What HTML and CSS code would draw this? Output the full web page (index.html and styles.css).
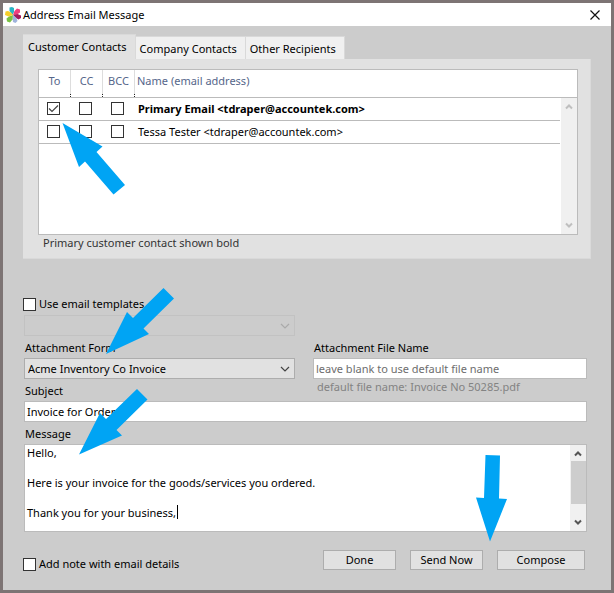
FILE: index.html
```html
<!DOCTYPE html>
<html lang="en">
<head>
<meta charset="utf-8">
<title>Address Email Message</title>
<link rel="stylesheet" href="styles.css">
</head>
<body>
<main class="window">
  <header class="titlebar">
    <svg class="logo" viewBox="0 0 16 16" aria-hidden="true">
      <path fill="#29b5c5" d="M7.500 8 4.500 4 4.500.5 7 0 9 1 9 5z"/>
      <path fill="#ee3f7c" d="M8 8 9.500 4 12 1.500 15 2.500 15 5.500 12 7.500z"/>
      <path fill="#a3195b" d="M8 8 12.500 7 16 8.500 16 11 13.500 12.500 11 11z"/>
      <path fill="#9fb4dc" d="M8 8 11.500 11 12.500 14 10.500 16 8 15 7.500 11z"/>
      <path fill="#7ac143" d="M8 8 7.500 12.500 5 15.500 2 14.500 1.500 11.500 4 9.500z"/>
      <path fill="#f5cf2b" d="M8 8 3.500 9.500 0 8 .5 4.500 3 4 6 5.500z"/>
    </svg>
    <h1 class="title">Address Email Message</h1>
    <button class="close" type="button" aria-label="Close">
      <svg viewBox="0 0 10 10"><path d="M.5.500 9.500 9.500M9.500.500.500 9.500" fill="none" stroke="#111" stroke-width="1.200"/></svg>
    </button>
  </header>

  <div class="content">
    <nav class="tabs" role="tablist">
      <button class="tab tab-active" type="button" role="tab" aria-selected="true">Customer Contacts</button>
      <button class="tab" type="button" role="tab">Company Contacts</button>
      <button class="tab" type="button" role="tab">Other Recipients</button>
    </nav>
    <section class="panel">
      <div class="grid">
        <table class="contacts">
          <thead>
            <tr><th class="pick">To</th><th class="pick">CC</th><th class="pick">BCC</th><th class="name">Name (email address)</th><th class="gutter"></th></tr>
          </thead>
          <tbody>
            <tr class="primary">
              <td><input class="check" type="checkbox" aria-label="To Primary Email" checked></td>
              <td><input class="check" type="checkbox" aria-label="CC Primary Email"></td>
              <td><input class="check" type="checkbox" aria-label="BCC Primary Email"></td>
              <td class="name">Primary Email &lt;tdraper@accountek.com&gt;</td>
            </tr>
            <tr>
              <td><input class="check" type="checkbox" aria-label="To Tessa Tester"></td>
              <td><input class="check" type="checkbox" aria-label="CC Tessa Tester"></td>
              <td><input class="check" type="checkbox" aria-label="BCC Tessa Tester"></td>
              <td class="name">Tessa Tester &lt;tdraper@accountek.com&gt;</td>
            </tr>
          </tbody>
        </table>
        <div class="scrollbar scrollbar-off grid-scroll">
          <svg class="chev" viewBox="0 0 8 6"><path d="M1 4.500 4 1.500 7 4.500"/></svg>
          <svg class="chev" viewBox="0 0 8 6"><path d="M1 1.500 4 4.500 7 1.500"/></svg>
        </div>
      </div>
      <p class="note">Primary customer contact shown bold</p>
    </section>

    <form class="form">
      <label class="option"><input class="check" type="checkbox">Use email templates</label>
      <div class="columns">
        <div class="picker">
          <select class="field" aria-label="Email template" disabled><option></option></select>
          <svg class="arrow arrow-off" viewBox="0 0 10 6"><path d="M1 1 5 5 9 1"/></svg>
        </div>
      </div>
      <div class="columns">
        <div class="column">
          <label class="label" for="form">Attachment Form</label>
          <div class="picker">
            <select class="field" id="form"><option>Acme Inventory Co Invoice</option></select>
            <svg class="arrow" viewBox="0 0 10 6"><path d="M1 1 5 5 9 1"/></svg>
          </div>
          <label class="label" for="subject">Subject</label>
        </div>
        <div class="column">
          <label class="label" for="file">Attachment File Name</label>
          <input class="field" id="file" type="text" placeholder="leave blank to use default file name">
          <p class="hint">default file name: Invoice No 50285.pdf</p>
        </div>
      </div>
      <input class="field" id="subject" type="text" value="Invoice for Order">
      <label class="label" for="message">Message</label>
      <div class="message">
        <textarea class="text" id="message" rows="5">Hello,

Here is your invoice for the goods/services you ordered.

Thank you for your business,</textarea>
        <span class="caret"></span>
        <div class="scrollbar">
          <svg class="chev" viewBox="0 0 8 6"><path d="M1 4.500 4 1.500 7 4.500"/></svg>
          <div class="thumb"></div>
          <svg class="chev" viewBox="0 0 8 6"><path d="M1 1.500 4 4.500 7 1.500"/></svg>
        </div>
      </div>
      <footer class="footer">
        <label class="option"><input class="check" type="checkbox">Add note with email details</label>
        <div class="actions">
          <button class="button" type="button">Done</button>
          <button class="button" type="button">Send Now</button>
          <button class="button button-wide" type="button">Compose</button>
        </div>
      </footer>
    </form>
  </div>

  <svg class="pointers" width="614" height="593" viewBox="0 0 614 593" aria-hidden="true">
    <path d="M62.500 123 102.500 146.500 96.500 152 125 185 113.500 194.500 85 161.500 79 167z"/>
    <path d="M106 354 127 312 133 318 163.500 288 174 298.500 143.500 328.500 149 334z"/>
    <path d="M79 454.500 100 413 106 419 137 389 147.500 399.500 116.500 430 122 435.500z"/>
    <path d="M490 541.500 476 497.500 484 498 485.500 455 500 455.500 499 498.500 507 499z"/>
  </svg>
</main>
</body>
</html>
```
FILE: styles.css
```css
* { box-sizing: border-box; }

body {
  margin: 0;
  font: 11px/16px "Noto Sans", "Open Sans", sans-serif;
  color: #000;
}

button, input, select, textarea { font: inherit; color: inherit; margin: 0; }
p, h1 { margin: 0; }

.window {
  position: relative;
  min-height: 100vh;
  background: #ccc;
  border: 3px solid #7d7474;
}

.titlebar {
  display: flex;
  align-items: center;
  height: 23px;
  padding: 0 11px 0 2px;
  background: #fff;
}
.logo { width: 16px; height: 16px; }
.title { flex: 1; margin-left: 2px; font-size: 11px; font-weight: 400; }
.close { display: flex; padding: 0; border: 0; background: none; }
.close svg { width: 10px; height: 10px; }

.content { padding: 8px 20px 0; }

.tabs { display: flex; align-items: flex-end; height: 25px; }
.tab {
  height: 23px;
  padding: 2px 6px 0 4px;
  border: 1px solid #d9d9d9;
  border-left-width: 0;
  border-bottom: 0;
  background: #f0f0f0;
  white-space: nowrap;
}
.tab + .tab { padding: 2px 8px 0 4px; }
.tab-active {
  height: 25px;
  padding: 0 8px 0 5px;
  background: #e1e1e1;
}

.panel {
  padding: 10px 12px 8px 15px;
  background: #e1e1e1;
  border-right: 1px solid #dadada;
  border-bottom: 1px solid #d9d9d9;
}
.grid {
  position: relative;
  height: 166px;
  background: #fff;
  border: 1px solid #bbb;
}
.contacts { width: 100%; table-layout: fixed; border-collapse: separate; border-spacing: 0; }
.contacts th {
  position: relative;
  height: 28px;
  padding: 0 0 5px;
  border-bottom: 1px solid #bbb;
  color: #56668a;
  font-weight: 400;
}
.contacts th.pick { width: 32px; border-right: 1px solid #ddd; }
.contacts th.pick::after {
  content: "";
  position: absolute;
  right: -1px;
  bottom: 0;
  width: 1px;
  height: 3px;
  background: linear-gradient(#222 1px, #fff 1px, #fff 2px, #222 2px);
}
.contacts th.name { padding-left: 2px; }
.contacts th.gutter { width: 17px; }
.contacts td { height: 23px; padding: 0 3px 1px 0; border-bottom: 1px solid #bbb; text-align: center; }
.contacts td.name { padding-left: 3px; }
.contacts .name { text-align: left; }
.primary { font-weight: 700; }
.contacts .check { display: block; margin: 0 auto; }

.scrollbar {
  display: flex;
  flex-direction: column;
  justify-content: space-between;
  align-items: center;
  width: 16px;
  padding: 6px 0;
  background: #f0f0f0;
}
.grid-scroll { position: absolute; top: 28px; right: 0; bottom: 0; }
.chev { width: 8px; height: 6px; fill: none; stroke: #555; stroke-width: 2; }
.scrollbar-off .chev { stroke: #bfbfbf; }
.thumb { width: 15px; height: 43px; margin-bottom: 12px; background: #cdcdcd; }

.note { padding-left: 5px; line-height: 15px; color: #333; }

.check {
  appearance: none;
  flex: none;
  width: 13px;
  height: 13px;
  background: #fff;
  border: 1px solid #333;
}
.check:checked {
  background: #fff url("data:image/svg+xml,%3Csvg xmlns='http://www.w3.org/2000/svg' viewBox='0 0 11 11'%3E%3Cpath d='M1 5.500 4 8.500 10 2.500' fill='none' stroke='%23444' stroke-width='1.200'/%3E%3C/svg%3E");
}

.form { display: flex; flex-direction: column; padding: 37px 4px 0 1px; }
.option { display: flex; align-items: center; gap: 3px; margin-left: -1px; }
.columns { display: grid; grid-template-columns: 271fr 274fr; gap: 18px; }
.form > .option { margin-bottom: 3px; }
.column { display: flex; flex-direction: column; }
.label { height: 22px; padding: 4px 0 0 1px; }
.field {
  width: 100%;
  height: 21px;
  padding: 0 2px;
  border: 1px solid #bbb;
  border-radius: 0;
  background: #fff;
}
.field::placeholder { color: #6d6d6d; opacity: 1; }
.picker { position: relative; display: flex; }
.picker .field { appearance: none; padding: 0 3px; border-color: #adadad; background: #e1e1e1; }
.picker .field:disabled { border-color: #bfbfbf; background: #ccc; }
.arrow {
  position: absolute;
  top: 8px;
  right: 5px;
  width: 10px;
  height: 6px;
  fill: none;
  stroke: #444;
  stroke-width: 1.200;
}
.arrow-off { stroke: #aaa; }
.hint { padding-left: 4px; color: #838383; }

.message { position: relative; display: flex; background: #fff; border: 1px solid #bbb; }
.text {
  flex: 1;
  height: 86px;
  padding: 0 2px;
  border: 0;
  background: none;
  line-height: 15px;
  resize: none;
  overflow: hidden;
}
.caret { position: absolute; left: 152px; top: 60px; width: 1px; height: 14px; background: #000; }

.footer { display: flex; justify-content: space-between; align-items: flex-start; margin-top: 18px; }
.footer .option { padding-top: 6px; }
.actions { display: flex; gap: 14px; padding-right: 2px; }
.button {
  width: 73px;
  height: 20px;
  padding: 0 0 1px;
  border: 1px solid #adadad;
  background: #e1e1e1;
  line-height: 16px;
}
.button-wide { width: 88px; }

.pointers { position: absolute; top: -3px; left: -3px; fill: #00a4f4; pointer-events: none; }
```
